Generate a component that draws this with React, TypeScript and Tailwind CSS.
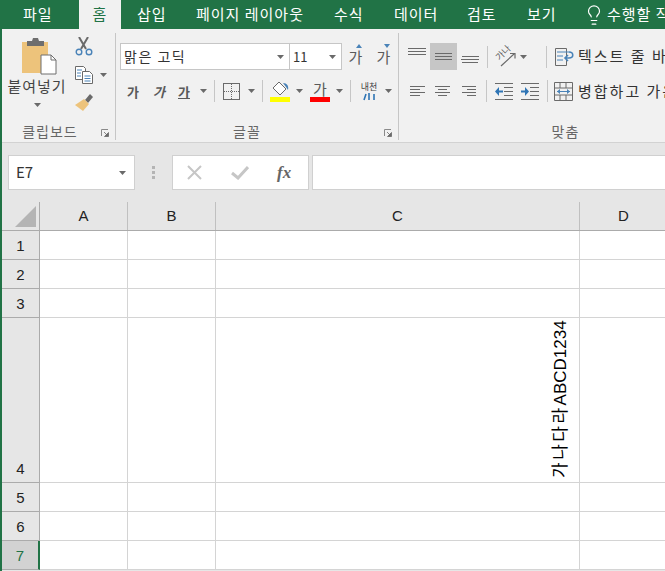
import { Lightbulb } from "lucide-react";

const font = "font-['Noto_Sans_CJK_KR','Noto_Sans',sans-serif]";

const Caret = ({ className = "" }: { className?: string }) => (
  <svg width="7" height="4" viewBox="0 0 7 4" className={`shrink-0 ${className}`}>
    <path d="M0 0h7L3.500 4z" fill="#6a6a6a" />
  </svg>
);

const Sep = ({ className = "" }: { className?: string }) => (
  <div className={`h-[22px] w-px shrink-0 bg-[#c6c6c6] ${className}`} />
);

const Launcher = () => (
  <svg width="8" height="8" viewBox="0 0 8 8" className="shrink-0">
    <path d="M.5 7V.5H7" fill="none" stroke="#8a8a8a" />
    <path d="M3 3l3.500 3.500M7.500 3.500v4h-4z" fill="#6a6a6a" stroke="#6a6a6a" strokeWidth=".8" />
  </svg>
);

const Lines = ({ widths, gap = 4, w = 18 }: { widths: [number, number][]; gap?: number; w?: number }) => (
  <svg width={w} height={(widths.length - 1) * gap + 1} className="shrink-0">
    {widths.map(([x, len], i) => (
      <rect key={i} x={x} y={i * gap} width={len} height="1" fill="#6a6a6a" />
    ))}
  </svg>
);

const Paste = () => (
  <svg width="36" height="38" viewBox="0 0 36 38" className="ml-[4px] shrink-0">
    <path d="M1 5h26v31H1z" fill="#edc37b" />
    <path d="M6 4h5l1-3h5l1 3h5v5H6z" fill="#6e6e6e" />
    <path d="M20 18h10l5 5v14H20z" fill="#fff" stroke="#6e6e6e" />
    <path d="M30 18v5h5" fill="none" stroke="#6e6e6e" />
  </svg>
);

const Scissors = () => (
  <svg width="18" height="19" viewBox="0 0 18 19" className="shrink-0">
    <path d="M4 0l7 12M13 0L6 12" stroke="#6a6a6a" strokeWidth="2" fill="none" />
    <circle cx="4" cy="15" r="2.800" fill="none" stroke="#4a83b8" strokeWidth="1.400" />
    <circle cx="14" cy="15" r="2.800" fill="none" stroke="#4a83b8" strokeWidth="1.400" />
  </svg>
);

const Copy = () => (
  <svg width="18" height="18" viewBox="0 0 18 18" className="shrink-0">
    <path d="M.5.5h8l2 2v11H.5z" fill="#fff" stroke="#6a6a6a" />
    <path d="M7.500 5.500h7l3 3v9h-10z" fill="#fff" stroke="#6a6a6a" />
    <path d="M2 4h5M2 7h4M2 10h4M9.500 10h6M9.500 12.500h6M9.500 15h6" stroke="#4a83b8" />
  </svg>
);

const Brush = () => (
  <svg width="18" height="17" viewBox="0 0 18 17" className="shrink-0">
    <path d="M10 6l5-6 3 3-5 6z" fill="#6a6a6a" />
    <path d="M9 5l5 5-6 7-8-6z" fill="#edc37b" />
  </svg>
);

const GrowFont = ({ down = false }: { down?: boolean }) => (
  <div className="relative flex h-[21px] w-[15px] shrink-0 items-center justify-center text-[15px] leading-none text-[#5a5a5a]">
    가
    <svg width="6" height="4" viewBox="0 0 6 4" className="absolute right-[1px] top-[-2px]">
      <path d={down ? "M0 0h6L3 4z" : "M3 0l3 4H0z"} fill="#4a83b8" />
    </svg>
  </div>
);

const BorderIcon = () => (
  <svg width="17" height="17" viewBox="0 0 17 17" className="shrink-0" shapeRendering="crispEdges">
    <path d="M.5.5h16v16H.5z" fill="none" stroke="#6a6a6a" />
    <path d="M.5 8.500h16M8.500.5v16" fill="none" stroke="#6a6a6a" strokeDasharray="1 1" />
  </svg>
);

const Fill = () => (
  <div className="flex w-5 shrink-0 flex-col items-center">
    <svg width="20" height="15" viewBox="0 0 20 15">
      <path d="M9 1l7 7-6 6-7-7z" fill="#fff" stroke="#6a6a6a" />
      <path d="M13 2c4 0 6 3 5 7l-2-3z" fill="#4a83b8" />
    </svg>
    <div className="mt-px h-[5px] w-5 bg-[#ffff00]" />
  </div>
);

const FontColor = () => (
  <div className="flex w-5 shrink-0 flex-col items-center">
    <span className="h-[15px] text-[15px] leading-[15px] text-[#5a5a5a]">가</span>
    <div className="mt-px h-[5px] w-5 bg-[#ff0000]" />
  </div>
);

const Orient = () => (
  <div className="relative h-[20px] w-[21px] shrink-0">
    <span className="absolute left-[0px] top-[1px] -rotate-45 whitespace-nowrap text-[9px] leading-[10px] text-[#5a5a5a]">가나</span>
    <svg width="21" height="20" viewBox="0 0 21 20" className="absolute left-0 top-0">
      <path d="M6 19L19 7M15 6.500h5v5" fill="none" stroke="#6a6a6a" strokeWidth="1.200" />
    </svg>
  </div>
);

const Wrap = () => (
  <svg width="19" height="18" viewBox="0 0 19 18" className="shrink-0">
    <path d="M.5.5h11v17H.5z" fill="none" stroke="#6a6a6a" />
    <path d="M2 4h12M2 8h6M2 12h6" stroke="#4a83b8" />
    <path d="M14 4c5 0 5 6 0 6h-3M13 7l-3 3 3 3" fill="none" stroke="#4a83b8" strokeWidth="1.600" />
  </svg>
);

const Merge = () => (
  <svg width="19" height="19" viewBox="0 0 19 19" className="shrink-0">
    <path d="M.5.5h18v18H.5zM.5 6h18M.5 13h18M6 .5V6M12 .5V6M6 13v5.500M12 13v5.500" fill="none" stroke="#6a6a6a" />
    <path d="M3 9.500h13" stroke="#4a83b8" />
    <path d="M6 7L3 9.500 6 12zM13 7l3 2.500-3 2.500z" fill="#4a83b8" />
  </svg>
);

const Indent = ({ right = false }: { right?: boolean }) => (
  <svg width="18" height="17" viewBox="0 0 18 17" className="shrink-0">
    <path d="M0 .5h18M9 4.500h9M9 8.500h9M9 12.500h9M0 16.500h18" stroke="#6a6a6a" />
    <path d={right ? "M0 7.500h4V4l4 4.500L4 13V9.500H0z" : "M8 7.500H4V4L0 8.500 4 13V9.500h4z"} fill="#2f75b5" />
  </svg>
);

const Group = ({ label, width, labelPad, pad = "", children }: { label: string; width: string; labelPad: string; pad?: string; children: React.ReactNode }) => (
  <div className={`flex h-full shrink-0 flex-col border-r border-[#c6c6c6] ${width}`}>
    <div className={`min-h-0 flex-1 ${pad}`}>{children}</div>
    <div className={`relative flex h-[18px] items-center justify-center text-[14px] leading-none tracking-[1px] text-[#666] ${labelPad}`}>
      {label}
      <div className="absolute bottom-[3px] right-[6px] flex">
        <Launcher />
      </div>
    </div>
  </div>
);

const tabs: [string, string][] = [
  ["파일", "w-[77px] pl-[21px]"],
  ["홈", "w-[42px] justify-center bg-[#f1f1f1] text-[#217346]"],
  ["삽입", "w-[59px] pl-[16px]"],
  ["페이지 레이아웃", "w-[139px] pl-[16px]"],
  ["수식", "w-[60px] pl-[15px]"],
  ["데이터", "w-[73px] pl-[15px]"],
  ["검토", "w-[59px] pl-[15px]"],
  ["보기", "w-[58px] pl-[16px]"],
];

const columns = [
  { name: "A", w: "w-[88px]" },
  { name: "B", w: "w-[88px]" },
  { name: "C", w: "w-[364px]" },
  { name: "D", w: "w-[88px]" },
];

const rows = [
  { n: 1, h: "h-[29px]" },
  { n: 2, h: "h-[29px]" },
  { n: 3, h: "h-[29px]" },
  { n: 4, h: "h-[165px]" },
  { n: 5, h: "h-[29px]" },
  { n: 6, h: "h-[29px]" },
  { n: 7, h: "h-[29px]" },
];

export default function App() {
  return (
    <div className={`h-[571px] w-[665px] overflow-hidden border-l-2 border-[#217346] bg-[#e6e6e6] ${font}`}>
      <div className="flex h-[29px] overflow-hidden bg-[#217346] text-[15px] tracking-[1px] text-white">
        {tabs.map(([t, c]) => (
          <div key={t} className={`flex h-full shrink-0 items-center whitespace-nowrap ${c}`}>
            {t}
          </div>
        ))}
        <div className="flex shrink-0 items-center gap-[2px] whitespace-nowrap pl-[14px]">
          <Lightbulb size={22} strokeWidth={1.300} />
          수행할 작업을
        </div>
      </div>

      <div className="flex h-[114px] overflow-hidden border-b border-[#d2d2d2] bg-[#f1f1f1] pb-[2px] pt-[4px]">
        <Group label="클립보드" width="w-[114px]" labelPad="pr-[17px]">
          <div className="flex h-full">
            <div className="flex w-[70px] flex-col items-center pt-[4px]">
              <Paste />
              <div className="mt-[1px] whitespace-nowrap text-[15px] leading-[20px] tracking-[1px] text-[#444]">붙여넣기</div>
              <Caret className="mt-[7px]" />
            </div>
            <div className="flex flex-col gap-[10px] pl-[3px] pt-[4px]">
              <Scissors />
              <div className="flex items-center gap-[7px]">
                <Copy />
                <Caret />
              </div>
              <Brush />
            </div>
          </div>
        </Group>

        <Group label="글꼴" width="w-[283px]" labelPad="pr-[20px]" pad="pl-[4px] pt-[10px]">
          <div className="flex h-[27px] items-center">
            <div className="flex h-full w-[170px] shrink-0 items-center justify-between border border-[#c6c6c6] bg-white pl-[3px] pr-[5px] text-[14px] tracking-[1.500px] text-[#333]">
              맑은 고딕
              <Caret />
            </div>
            <div className="flex h-full w-[52px] shrink-0 items-center justify-between border border-l-0 border-[#c6c6c6] bg-white pl-[3px] pr-[5px] text-[13px] text-[#333]">
              11
              <Caret />
            </div>
            <div className="ml-[6px] flex gap-[13px]">
              <GrowFont />
              <GrowFont down />
            </div>
          </div>
          <div className="mt-[10px] flex h-[22px] items-center text-[13px] font-bold leading-none text-[#5a5a5a]">
            <span className="ml-[7px] w-[13px]">가</span>
            <span className="ml-[13px] w-[13px] italic">가</span>
            <span className="ml-[12px] w-[14px] font-bold underline">가</span>
            <Caret className="ml-[8px]" />
            <Sep className="ml-[7px]" />
            <div className="ml-[8px] flex">
              <BorderIcon />
            </div>
            <Caret className="ml-[8px]" />
            <Sep className="ml-[7px]" />
            <div className="ml-[7px] flex">
              <Fill />
            </div>
            <Caret className="ml-[6px]" />
            <div className="ml-[7px] flex font-normal">
              <FontColor />
            </div>
            <Caret className="ml-[6px]" />
            <Sep className="ml-[7px]" />
            <div className="ml-[8px] flex w-[20px] flex-col items-center font-normal">
              <span className="text-[9px] leading-[11px] text-[#444]">내천</span>
              <svg width="12" height="9" viewBox="0 0 12 9">
                <path d="M1 8l2-6M6 8V1M11 8V2" stroke="#2f75b5" strokeWidth="1.600" />
              </svg>
            </div>
            <Caret className="ml-[6px]" />
          </div>
        </Group>

        <div className="flex h-full min-w-0 flex-1 flex-col">
          <div className="min-h-0 flex-1 pl-[9px] pt-[10px]">
            <div className="flex h-[27px] items-center">
              <div className="mb-[10px] flex w-[20px] shrink-0">
                <Lines widths={[[0, 18], [0, 18], [0, 18]]} gap={3} />
              </div>
              <div className="ml-[2px] flex h-[27px] w-[27px] shrink-0 items-center justify-center bg-[#c6c6c6]">
                <Lines widths={[[0, 17], [0, 17], [0, 17]]} gap={3} />
              </div>
              <div className="ml-[4px] mt-[5px] flex w-[18px] shrink-0">
                <Lines widths={[[1, 17], [0, 18], [1, 16]]} gap={3} />
              </div>
              <Sep className="ml-[8px]" />
              <div className="ml-[7px] flex">
                <Orient />
              </div>
              <Caret className="ml-[4px]" />
              <Sep className="ml-[19px]" />
              <div className="ml-[8px] flex">
                <Wrap />
              </div>
              <span className="ml-[4px] whitespace-nowrap text-[15px] tracking-[2px] text-[#333]">텍스트 줄 바꿈</span>
            </div>
            <div className="mt-[10px] flex h-[22px] items-center">
              <div className="ml-[2px] flex">
                <Lines widths={[[0, 15], [0, 10], [0, 15], [0, 10]]} gap={3} w={16} />
              </div>
              <div className="ml-[9px] flex">
                <Lines widths={[[0, 15], [3, 9], [0, 15], [3, 9]]} gap={3} w={16} />
              </div>
              <div className="ml-[11px] flex">
                <Lines widths={[[0, 14], [5, 9], [0, 14], [5, 9]]} gap={3} w={14} />
              </div>
              <Sep className="ml-[10px]" />
              <div className="ml-[8px] flex gap-[8px]">
                <Indent />
                <Indent right />
              </div>
              <Sep className="ml-[8px]" />
              <div className="ml-[6px] flex">
                <Merge />
              </div>
              <span className="ml-[5px] whitespace-nowrap text-[15px] tracking-[2px] text-[#333]">병합하고 가운데 맞춤</span>
            </div>
          </div>
          <div className="flex h-[18px] items-center justify-center pl-[67px] text-[14px] leading-none tracking-[1px] text-[#666]">맞춤</div>
        </div>
      </div>

      <div className="mt-[12px] flex h-[35px] items-stretch pl-[6px]">
        <div className="flex w-[127px] shrink-0 items-center justify-between border border-[#d0d0d0] bg-white pl-[7px] pr-[8px] text-[15px] text-[#333]">
          E7
          <Caret />
        </div>
        <div className="flex w-[37px] shrink-0 flex-col items-center justify-center gap-[2px]">
          <div className="h-[3px] w-[3px] bg-[#b4b4b4]" />
          <div className="h-[3px] w-[3px] bg-[#b4b4b4]" />
          <div className="h-[3px] w-[3px] bg-[#b4b4b4]" />
        </div>
        <div className="flex w-[137px] shrink-0 items-center border border-[#d0d0d0] bg-white">
          <svg width="16" height="15" viewBox="0 0 16 15" className="ml-[14px] shrink-0">
            <path d="M1 1l13 13M14 1L1 14" stroke="#c6c6c6" strokeWidth="2" />
          </svg>
          <svg width="18" height="15" viewBox="0 0 18 15" className="ml-[28px] shrink-0">
            <path d="M1 8l6 5L17 2" fill="none" stroke="#c6c6c6" strokeWidth="3" />
          </svg>
          <span className="ml-[28px] font-['Liberation_Serif',serif] text-[17px] font-bold italic leading-none text-[#666]">fx</span>
        </div>
        <div className="ml-[3px] flex-1 border-y border-l border-[#d0d0d0] bg-white" />
      </div>

      <div className="mt-[12px] bg-white">
        <div className="flex h-[29px] border-b border-[#ababab] bg-[#e6e6e6]">
          <div className="flex w-[38px] shrink-0 items-end justify-end border-r border-[#ababab] pb-[3px] pr-[3px]">
            <svg width="21" height="21" viewBox="0 0 21 21">
              <path d="M21 0v21H0z" fill="#b4b4b4" />
            </svg>
          </div>
          {columns.map((c) => (
            <div
              key={c.name}
              className={`flex shrink-0 items-center justify-center border-r border-[#c0c0c0] pt-[1px] font-['Liberation_Sans',sans-serif] text-[15px] text-[#222] ${c.w}`}
            >
              {c.name}
            </div>
          ))}
        </div>
        {rows.map((r) => (
          <div key={r.n} className={`flex ${r.h}`}>
            <div
              className={
                r.n === 7
                  ? "flex w-[38px] shrink-0 items-end justify-center border-r-2 border-b border-b-[#ababab] border-r-[#217346] bg-[#d2d2d2] pb-[2px] font-['Liberation_Sans',sans-serif] text-[15px] leading-[22px] text-[#217346]"
                  : "flex w-[38px] shrink-0 items-end justify-center border-r border-b border-[#ababab] bg-[#e6e6e6] pb-[2px] font-['Liberation_Sans',sans-serif] text-[15px] leading-[22px] text-[#222]"
              }
            >
              {r.n}
            </div>
            {columns.map((c) => (
              <div key={c.name} className={`flex shrink-0 justify-end border-r border-b border-[#d4d4d4] bg-white ${c.w}`}>
                {c.name === "C" && r.n === 4 && (
                  <div className="mr-[8px] h-full rotate-180 whitespace-nowrap pt-[4px] font-['Liberation_Sans','Noto_Sans_CJK_KR',sans-serif] text-[17px] leading-[20px] text-black [text-orientation:sideways] [writing-mode:vertical-rl]">
                    <span className="tracking-[2.500px]">가나다라</span>ABCD1234
                  </div>
                )}
              </div>
            ))}
          </div>
        ))}
      </div>
    </div>
  );
}
